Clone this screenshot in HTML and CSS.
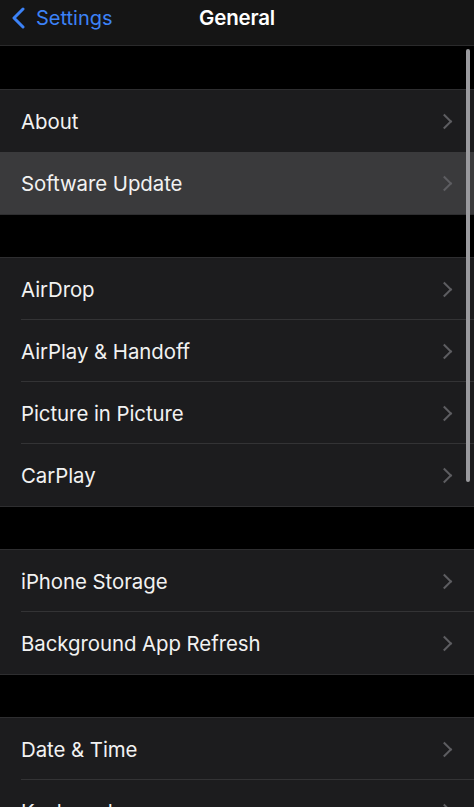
FILE: index.html
```html
<!DOCTYPE html>
<html lang="en">
<head>
    <meta charset="UTF-8">
    <meta name="viewport" content="width=device-width, initial-scale=1.0">
    <title>General</title>
    <link rel="stylesheet" href="styles.css">
</head>
<body>
    <header class="navbar">
        <a class="back" href="#">
            <svg class="back-icon" width="16" height="22" viewBox="0 0 16 22">
                <polyline points="13,2 4,11 13,20" fill="none" stroke="#3c82f6" stroke-width="3" stroke-linecap="round" stroke-linejoin="round"/>
            </svg>
            <span>Settings</span>
        </a>
        <h1>General</h1>
    </header>

    <main class="content">
        <ul class="group first">
            <li class="row"><span>About</span><i class="chev"></i></li>
            <li class="row active"><span>Software Update</span><i class="chev"></i></li>
        </ul>
        <ul class="group">
            <li class="row"><span>AirDrop</span><i class="chev"></i></li>
            <li class="row"><span>AirPlay &amp; Handoff</span><i class="chev"></i></li>
            <li class="row"><span>Picture in Picture</span><i class="chev"></i></li>
            <li class="row"><span>CarPlay</span><i class="chev"></i></li>
        </ul>
        <ul class="group">
            <li class="row"><span>iPhone Storage</span><i class="chev"></i></li>
            <li class="row"><span>Background App Refresh</span><i class="chev"></i></li>
        </ul>
        <ul class="group">
            <li class="row"><span>Date &amp; Time</span><i class="chev"></i></li>
            <li class="row"><span>Keyboard</span><i class="chev"></i></li>
        </ul>
        <div class="scrollbar"></div>
    </main>
</body>
</html>
```

FILE: styles.css
```css
body {
    margin: 0;
    background-color: #000;
    font-family: Inter, "Liberation Sans", sans-serif;
    color: #fff;
    height: 807px;
    overflow: hidden;
}
.navbar {
    position: relative;
    height: 46px;
    box-sizing: border-box;
    padding-bottom: 10px;
    background-color: #151515;
    border-bottom: 1px solid #2a2a2b;
    display: flex;
    align-items: center;
    justify-content: center;
}
.navbar h1 {
    margin: 0;
    font-size: 20.5px;
    font-weight: 600;
    letter-spacing: -0.2px;
}
.back {
    position: absolute;
    left: 10px;
    top: 0;
    height: 36px;
    display: flex;
    align-items: center;
    gap: 10px;
    color: #3c82f6;
    text-decoration: none;
    font-size: 20px;
}
.content {
    position: relative;
    display: flow-root;
}
.group {
    list-style: none;
    margin: 42px 0 0;
    padding: 0;
    background-color: #1c1c1e;
    border-top: 1px solid #2e2e30;
    border-bottom: 1px solid #2e2e30;
}
.group.first {
    margin-top: 43px;
}
.row {
    position: relative;
    height: 62px;
    display: flex;
    align-items: center;
    justify-content: space-between;
    padding: 0 23px 0 21px;
    font-size: 20.4px;
    letter-spacing: -0.05px;
    color: #f2f2f2;
}
.row + .row::before {
    content: "";
    position: absolute;
    top: -1px;
    left: 21px;
    right: 0;
    border-top: 1px solid #333335;
}
.row.active {
    background-color: #3a3a3c;
}
.row.active::before, .row.active + .row::before {
    display: none;
}
.chev {
    width: 9px;
    height: 9px;
    border-top: 2px solid #5d5d61;
    border-right: 2px solid #5d5d61;
    transform: rotate(45deg);
    margin-right: 1px;
}
.scrollbar {
    position: absolute;
    top: 3px;
    right: 4px;
    width: 4px;
    height: 433px;
    border-radius: 2px;
    background-color: #9a9a9e;
}
```
